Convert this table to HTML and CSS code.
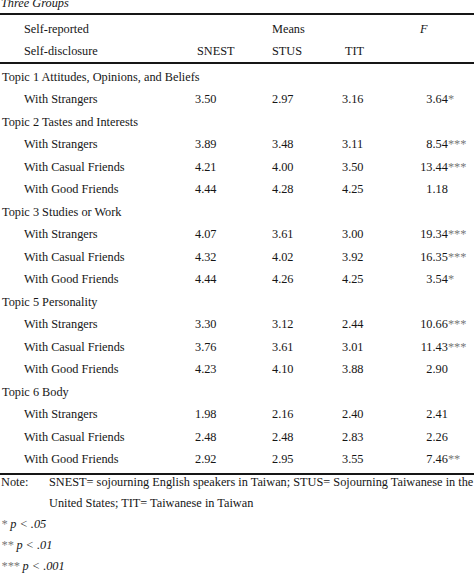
FILE: index.html
```html
<!DOCTYPE html>
<html lang="en">
<head>
<meta charset="utf-8">
<title>Self-disclosure means by group</title>
<link rel="stylesheet" href="styles.css">
</head>
<body>
<div class="title">Three Groups</div>
<table class="data">
  <colgroup>
    <col class="c-label"><col class="c-snest"><col class="c-stus"><col class="c-tit"><col class="c-f">
  </colgroup>
  <thead>
    <tr class="h1">
      <th class="lbl">Self-reported</th>
      <th></th>
      <th>Means</th>
      <th></th>
      <th class="fh">F</th>
    </tr>
    <tr class="h2">
      <th class="lbl">Self-disclosure</th>
      <th class="snest">SNEST</th>
      <th>STUS</th>
      <th class="tit">TIT</th>
      <th></th>
    </tr>
  </thead>
  <tbody>
    <tr class="topic first"><td colspan="5">Topic 1 Attitudes, Opinions, and Beliefs</td></tr>
    <tr><td class="lbl">With Strangers</td><td>3.50</td><td>2.97</td><td>3.16</td><td class="f"><span class="i">3</span>.64<span class="sig">*</span></td></tr>
    <tr class="topic"><td colspan="5">Topic 2 Tastes and Interests</td></tr>
    <tr><td class="lbl">With Strangers</td><td>3.89</td><td>3.48</td><td>3.11</td><td class="f"><span class="i">8</span>.54<span class="sig">***</span></td></tr>
    <tr><td class="lbl">With Casual Friends</td><td>4.21</td><td>4.00</td><td>3.50</td><td class="f"><span class="i">13</span>.44<span class="sig">***</span></td></tr>
    <tr><td class="lbl">With Good Friends</td><td>4.44</td><td>4.28</td><td>4.25</td><td class="f"><span class="i">1</span>.18</td></tr>
    <tr class="topic"><td colspan="5">Topic 3 Studies or Work</td></tr>
    <tr><td class="lbl">With Strangers</td><td>4.07</td><td>3.61</td><td>3.00</td><td class="f"><span class="i">19</span>.34<span class="sig">***</span></td></tr>
    <tr><td class="lbl">With Casual Friends</td><td>4.32</td><td>4.02</td><td>3.92</td><td class="f"><span class="i">16</span>.35<span class="sig">***</span></td></tr>
    <tr><td class="lbl">With Good Friends</td><td>4.44</td><td>4.26</td><td>4.25</td><td class="f"><span class="i">3</span>.54<span class="sig">*</span></td></tr>
    <tr class="topic"><td colspan="5">Topic 5 Personality</td></tr>
    <tr><td class="lbl">With Strangers</td><td>3.30</td><td>3.12</td><td>2.44</td><td class="f"><span class="i">10</span>.66<span class="sig">***</span></td></tr>
    <tr><td class="lbl">With Casual Friends</td><td>3.76</td><td>3.61</td><td>3.01</td><td class="f"><span class="i">11</span>.43<span class="sig">***</span></td></tr>
    <tr><td class="lbl">With Good Friends</td><td>4.23</td><td>4.10</td><td>3.88</td><td class="f"><span class="i">2</span>.90</td></tr>
    <tr class="topic"><td colspan="5">Topic 6 Body</td></tr>
    <tr><td class="lbl">With Strangers</td><td>1.98</td><td>2.16</td><td>2.40</td><td class="f"><span class="i">2</span>.41</td></tr>
    <tr><td class="lbl">With Casual Friends</td><td>2.48</td><td>2.48</td><td>2.83</td><td class="f"><span class="i">2</span>.26</td></tr>
    <tr class="last"><td class="lbl">With Good Friends</td><td>2.92</td><td>2.95</td><td>3.55</td><td class="f"><span class="i">7</span>.46<span class="sig">**</span></td></tr>
  </tbody>
</table>
<div class="notes">
  <div class="note">
    <span class="note-key">Note:</span>
    <span class="note-text"><span class="ln">SNEST= sojourning English speakers in Taiwan; STUS= Sojourning Taiwanese in the</span><span class="ln">United States; TIT= Taiwanese in Taiwan</span></span>
  </div>
  <div class="fn"><span class="sig">*</span> <i>p</i> &lt; <i>.05</i></div>
  <div class="fn"><span class="sig">**</span> <i>p</i> &lt; <i>.01</i></div>
  <div class="fn"><span class="sig">***</span> <i>p</i> &lt; <i>.001</i></div>
</div>
</body>
</html>
```
FILE: styles.css
```css
html, body {
  margin: 0;
  padding: 0;
  background: #ffffff;
  overflow: hidden;
}
body {
  font-family: "Liberation Serif", "Times New Roman", serif;
  font-size: 12.3px;
  color: #161616;
  width: 474px;
}
.title {
  font-style: italic;
  line-height: 7px;
  padding: 0 0 6px 1px;
}
.data {
  width: 474px;
  table-layout: fixed;
  border-collapse: separate;
  border-spacing: 0;
}
.c-label { width: 195px; }
.c-snest { width: 77px; }
.c-stus { width: 70px; }
.c-tit { width: 78px; }
.c-f { width: 54px; }
.data th, .data td {
  padding: 0;
  text-align: left;
  font-weight: normal;
  white-space: nowrap;
  vertical-align: top;
}
.data thead th {
  line-height: 21.5px;
}
.data .h1 th {
  border-top: 2px solid #161616;
  padding-top: 4px;
}
.data .h2 th {
  border-bottom: 2px solid #161616;
}
.data th.lbl, .data td.lbl {
  padding-left: 24px;
}
.data th.snest { padding-left: 2px; }
.data th.tit { padding-left: 3px; }
.data th.fh { font-style: italic; }
.data tbody td {
  line-height: 22.5px;
}
.data .topic td {
  padding-left: 2px;
}
.data .first td {
  padding-top: 1.5px;
}
.data .last td {
  padding-bottom: 2px;
  border-bottom: 2px solid #161616;
}
.f .i {
  display: inline-block;
  width: 12.5px;
  text-align: right;
}
.sig {
  color: #777777;
}
.notes {
  margin-top: -3px;
  line-height: 21px;
}
.note {
  display: flex;
  padding-left: 1px;
}
.note-key {
  width: 48px;
  flex: none;
}
.note-text {
  display: flex;
  flex-direction: column;
  white-space: nowrap;
}
.fn {
  padding-left: 1px;
  font-style: italic;
}
```
